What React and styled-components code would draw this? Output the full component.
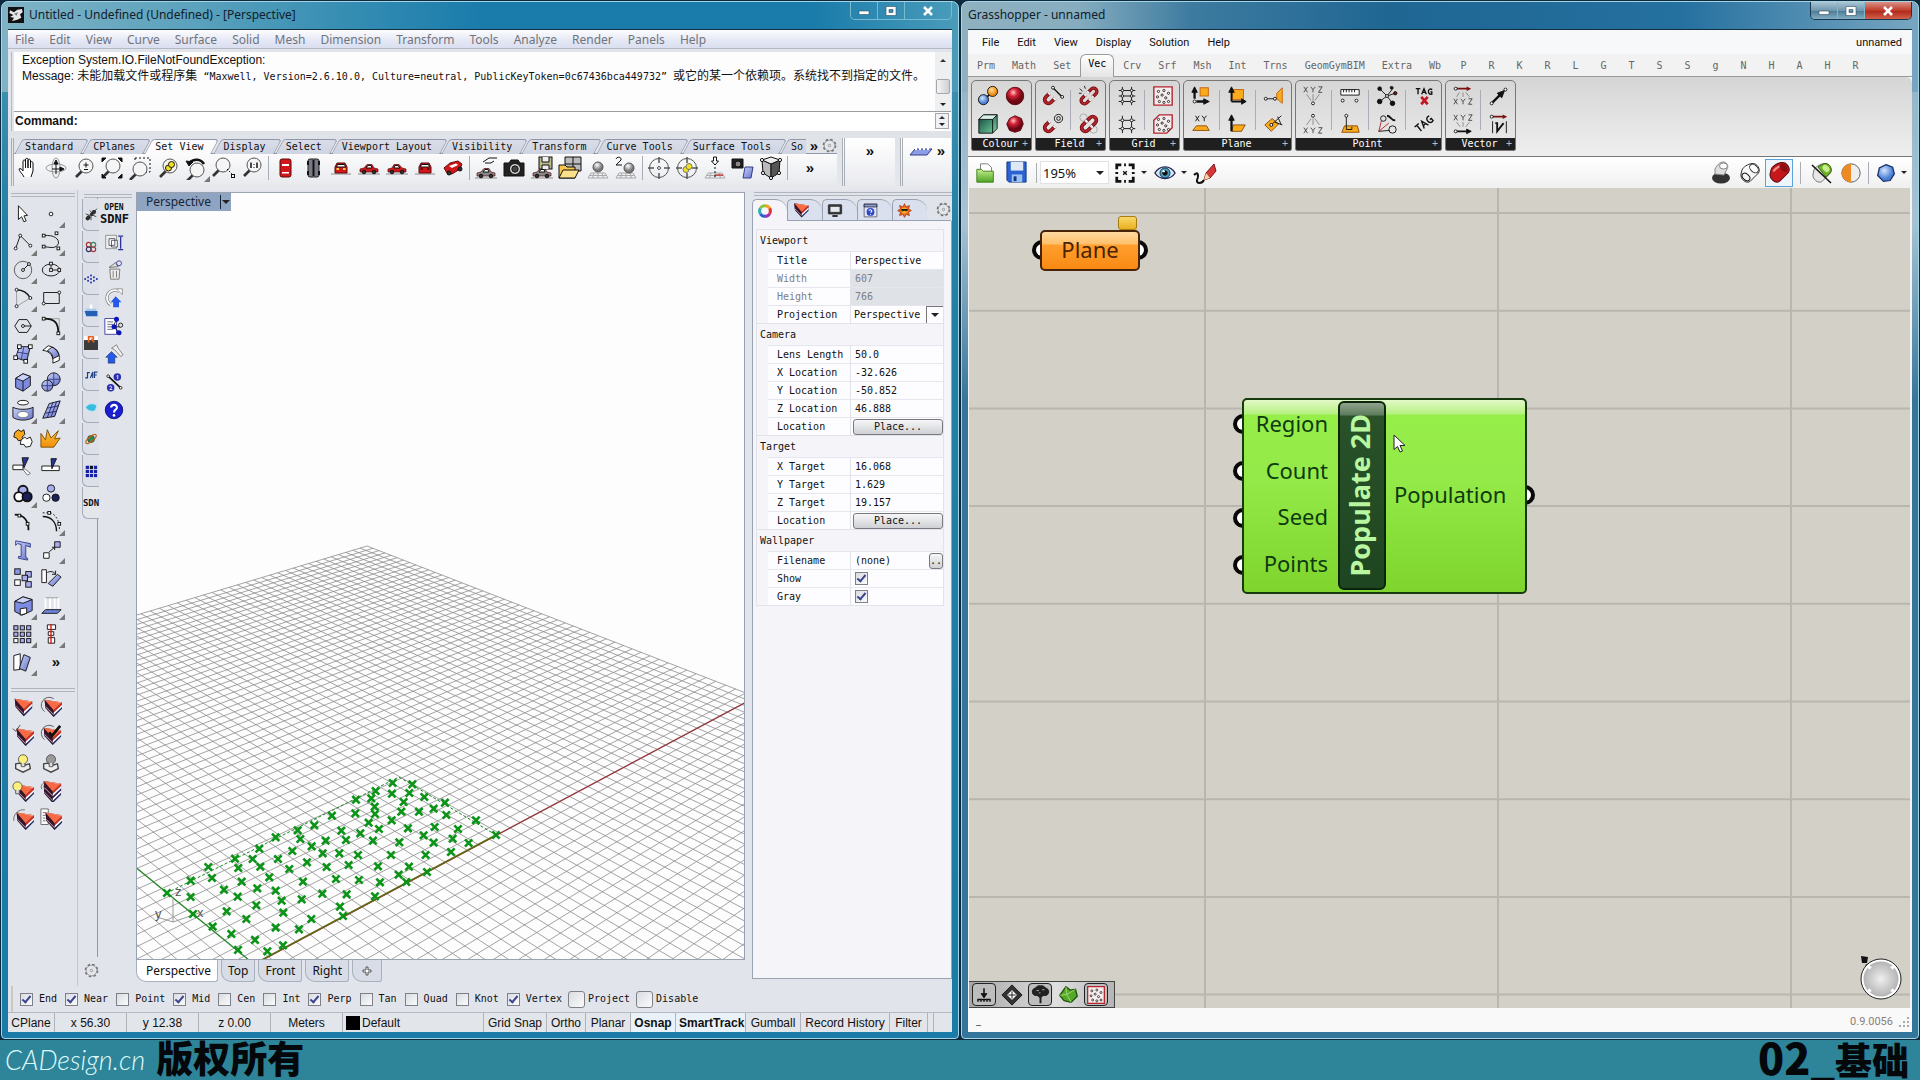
import React from "react";
import styled, { createGlobalStyle, css } from "styled-components";

const SONG = `"DejaVu Sans Mono", "Noto Sans CJK SC", monospace`;
const ARIAL = `"Liberation Sans", Arial, sans-serif`;
const HUMAN = `"Noto Sans", "Open Sans", sans-serif`;
const HEI = `"Noto Sans CJK SC", sans-serif`;

const Global = createGlobalStyle`
  *, *::before, *::after { box-sizing: border-box; }
  body { margin: 0; background: #0d2a3e; font: 12px/16px ${ARIAL}; color: #111; }
  button, input, select { font: inherit; color: inherit; margin: 0; padding: 0; border: 0; background: none; border-radius: 0; outline: none; }
  h1, p { margin: 0; font: inherit; }
`;

/* ---------- drawings ---------- */

const Art = styled.svg`
  display: block;
  flex: none;
  width: ${(p) => p.$s || 24}px;
  height: ${(p) => p.$s || 24}px;
`;

const Paints = () => (
  <svg width="0" height="0" style={{ display: "block" }} aria-hidden="true">
    <defs>
      <radialGradient id="red" cx=".4" cy=".3"><stop offset="0" stopColor="#ffc9c9" /><stop offset=".45" stopColor="#d82338" /><stop offset="1" stopColor="#6e0713" /></radialGradient>
      <radialGradient id="grey" cx=".4" cy=".3"><stop offset="0" stopColor="#fff" /><stop offset="1" stopColor="#777" /></radialGradient>
      <radialGradient id="orange" cx=".4" cy=".35"><stop offset="0" stopColor="#ffdf9a" /><stop offset="1" stopColor="#ef8a0d" /></radialGradient>
      <radialGradient id="blue" cx=".4" cy=".35"><stop offset="0" stopColor="#d2e6ff" /><stop offset="1" stopColor="#4a7ed2" /></radialGradient>
      <linearGradient id="peri" x2="1" y2="1"><stop offset="0" stopColor="#ccd3fb" /><stop offset="1" stopColor="#6473c9" /></linearGradient>
      <linearGradient id="teal" x2="1" y2="1"><stop offset="0" stopColor="#0d4038" /><stop offset="1" stopColor="#78d6a2" /></linearGradient>
      <linearGradient id="green" y2="1" x2="0"><stop offset="0" stopColor="#c6ee8e" /><stop offset="1" stopColor="#4ba522" /></linearGradient>
      <linearGradient id="fire" x2="0" y2="1"><stop offset="0" stopColor="#ffc23a" /><stop offset="1" stopColor="#ef8f0b" /></linearGradient>
      <radialGradient id="compass"><stop offset="0" stopColor="#efefef" /><stop offset="1" stopColor="#b4b4b4" /></radialGradient>
    </defs>
  </svg>
);

const Lens = ({ x = 14, y = 10 }) => (
  <g><path d={`M${x - 4} ${y + 5}L${x - 10} ${y + 11}`} strokeWidth="2.6" stroke="#333" /><circle cx={x} cy={y} r="7" fill="#f5f5f5" stroke="#555" /></g>
);
const Node = ({ x, y, s = 3 }) => <rect x={x - s / 2} y={y - s / 2} width={s} height={s} fill="#fff" stroke="#111" />;
const Dot = ({ x, y, r = 1.6, f = "#fff" }) => <circle cx={x} cy={y} r={r} fill={f} stroke="#111" />;
const Cake = ({ x = 0, y = 0 }) => (
  <g transform={`translate(${x} ${y})`} stroke="none">
    <path d="M2 3L21 6V13L12 22 3 12Z" fill="#20265e" />
    <path d="M2 3L12 14V22L3 12Z" fill="#3a1226" />
    <path d="M2 3L21 6 12 14.500Z" fill="#f86a44" /><path d="M2 3L21 6 20 7Z" fill="#fba184" />
    <path d="M12 14.500L21 6V8.500L12 17Z" fill="#d5301c" /><path d="M12 17L21 8.500V11L12 19.500Z" fill="#fff" />
    <path d="M3 10L12 19V20L3 11Z" fill="#b9b4c2" />
  </g>
);
const CarSide = ({ y = 0, c = "#d3161a" }) => (
  <g transform={`translate(0 ${y})`}><path d="M1 18H23" stroke="#8a8a8a" /><path d="M3 16V13L7 12 10 8.500H15L17 12 21 13V16Z" fill={c} stroke="#5c0b0b" strokeWidth=".7" /><path d="M11 9.500H14L15 12H9Z" fill="#fff" /><Dot x={7} y={16} r={1.800} f="#333" /><Dot x={17} y={16} r={1.800} f="#333" /></g>
);
const CarFront = ({ c = "#ffd23a" }) => (
  <g><path d="M2 18H22" stroke="#8a8a8a" /><path d="M6 17V11L8 7H16L18 11V17Z" fill="#d3161a" stroke="#5c0b0b" /><path d="M8.500 8.500H15.500L16.500 11H7.500Z" fill="#fff" /><path d="M7.500 13H10M14 13H16.500" stroke={c} strokeWidth="2" /></g>
);
const Ground = () => <path d="M5 17H19L22 22H2ZM8 17L6.500 22M12 17V22M16 17L17.500 22M4 19.500H20" stroke="#aaa" />;
const Bulb = ({ f = "#fdf07a", x = 12, y = 8 }) => (
  <g><circle cx={x} cy={y} r="5" fill={f} stroke="#555" /><path d={`M${x - 2} ${y + 4}V${y + 8}H${x + 2}V${y + 4}`} fill="#ddd" stroke="#555" /></g>
);
const Tray = () => <path d="M4 13L9 12 12 15 19 13 20 18 12 22 4 18Z" fill="#eee" stroke="#444" strokeWidth="1.500" />;
const Curl = () => <path d="M5 17A8.500 8.500 0 0 1 15 3" stroke="#555" />;
const Magnet = ({ x, y, r = 45, s = 0.9 }) => (
  <g transform={`translate(${x} ${y}) rotate(${r}) scale(${s})`}>
    <path d="M-4.500 -7V0A4.500 4.500 0 0 0 4.500 0V-7" stroke="#6e0c12" strokeWidth="4.500" />
    <path d="M-4.500 -4V0A4.500 4.500 0 0 0 4.500 0V-4" stroke="#b5222a" strokeWidth="2.500" />
    <path d="M-6.500 -6H-2.500M2.500 -6H6.500" stroke="#f2f2f2" strokeWidth="2.500" />
  </g>
);
const Xyz = ({ y }) => (
  <g stroke="#333" strokeWidth=".9"><path d={`M2 ${y}l4 6m0-6l-4 6M9.500 ${y}l2.500 3 2.500-3m-2.500 3v3M18 ${y}h4l-4 6h4`} /></g>
);
const barrel = "M4 9C5 6 10 3 14 2.500 19 2 23 8 20.500 12L12 20.500C8 23 2 18 3 13Z";
const Can = ({ a, b }) => (
  <g stroke="#333"><path d={barrel} fill={a} strokeLinejoin="round" /><ellipse cx="16" cy="7.500" rx="5" ry="3.500" transform="rotate(45 16 7.500)" fill={b} /></g>
);
const Pop = () => <g>{[[7, 7], [13, 6], [18, 9], [6, 13], [11, 11], [15, 14], [8, 18], [13, 19], [18, 18]].map(([x, y]) => <circle key={x * 30 + y} cx={x} cy={y} r="1.200" fill="#fff" stroke="#111" strokeWidth=".9" />)}</g>;
const Target = () => <g stroke="#555"><circle cx="12" cy="12" r="9.500" /><path d="M12 1V7M12 17V23M1 12H7M17 12H23" strokeWidth="1.500" /></g>;
const tetra = "M3 4L12 1 21 4 12 8Z";

const art = {
  hand: <path d="M8 21C6 17 3 15 3 13 4 12 6 13 7 15V5C8 3 9 4 9.500 6V12 3C10 2 12 2 12 3.500V12 4C13 2.500 14.500 3 14.500 5V12 6C15.500 5 17 6 17 7V15L15 21" fill="#fff" />,
  orbit: <g><ellipse cx="12" cy="12" rx="10" ry="4" stroke="#999" /><ellipse cx="12" cy="12" rx="4" ry="10" stroke="#999" /><path d="M12 7V18M8 13H17" /><path d="M10 8L12 4 14 8ZM16 11L20 13 16 15Z" fill="#111" /></g>,
  zoom: <g><Lens /><path d="M11.500 9H16.500M14 6.500V11.500M12 13.500H16" /></g>,
  zoomExt: <g><Lens x={13} y={10} /><path d="M2 6V2H6ZM18 2H22V6ZM22 18V22H18ZM2 18V22H6Z" fill="#111" /></g>,
  zoomWin: <g><Lens x={12} y={13} /><path d="M7 2H22V16H18M7 2V6" strokeDasharray="2 2" /></g>,
  zoomSel: <g><Lens /><circle cx="12.500" cy="12" r="3" fill="#f2e21e" /><circle cx="15.500" cy="8.500" r="3" fill="#f2e21e" /></g>,
  undoView: <g><Lens x={13} y={14} /><path d="M5 7C10 2 17 3 20 8" strokeWidth="2.500" /><path d="M2 5L5 10 9 6Z" fill="#111" /></g>,
  zoomTo: <g><Lens x={11} y={9} /><path d="M15 13L20 18" strokeDasharray="1.500 1.500" /><Node x={21} y={20} /></g>,
  zoom11: <g><Lens x={14} y={9} /><path d="M11 6.500V12M17 6.500V12" strokeWidth="1.500" /><path d="M14 8V9M14 11V12" /></g>,
  carTop: <g><rect x="7" y="3" width="11" height="18" rx="2" fill="#d3161a" stroke="#5c0b0b" /><path d="M9 8H16V10H9ZM9 16H16V17.500H9Z" fill="#fff" stroke="none" /></g>,
  carBot: <g><rect x="7" y="3" width="11" height="18" rx="2" fill="#777a84" stroke="#222" /><path d="M12.500 4V20" strokeWidth="2" /><path d="M7 5V9M18 5V9M7 15V19M18 15V19" strokeWidth="2" /></g>,
  carFront: <CarFront />, carBack: <CarFront c="#6d0a0a" />, carR: <CarSide />, carL: <g transform="matrix(-1 0 0 1 24 0)"><CarSide /></g>,
  carIso: <g><path d="M3 12L9 7 17 5 21 8 19 13 11 18 6 17Z" fill="#d3161a" stroke="#5c0b0b" /><path d="M8 10L15 7.500 17 9 11 12Z" fill="#fff" stroke="none" /><Dot x={8} y={17} r={2} f="#333" /><Dot x={19} y={13} r={2} f="#333" /></g>,
  carHand: <g><CarSide y={4} c="#888" /><path d="M9 6L15 2H23M11 7H17L20 5" /></g>,
  camera: <g><path d="M2 7H7L9 4H16L18 7H22V20H2Z" fill="#222" /><circle cx="13" cy="13" r="5.500" fill="#ddd" /><circle cx="13" cy="13" r="3.200" fill="#444" /></g>,
  carSave: <g><CarSide y={4} c="#888" /><rect x="9" y="1" width="13" height="12" fill="#b9b887" /><path d="M12 1V6H19V1M12 13V9H19V13" fill="#eee" /></g>,
  folderWin: <g><path d="M7 1H23V15H7ZM15 1V15M7 8H23" fill="#bbb" /><path d="M1 22V9H7L9 11H17V22Z" fill="#f7c64b" /><path d="M1 22L5 14H21L17 22Z" fill="#fde08a" /></g>,
  ball: <g><Ground /><circle cx="12" cy="11" r="5" fill="url(#grey)" stroke="#555" /></g>,
  ball2: <g><Ground /><circle cx="15" cy="12" r="5" fill="url(#grey)" stroke="#555" /><path d="M2 3C3 0 8 1 7 4L2 9H8" /></g>,
  target: <g><Target /><circle cx="12" cy="12" r="1.500" stroke="#555" /></g>,
  targetSel: <g><Target /><circle cx="11" cy="13.500" r="3" fill="#f2e21e" stroke="#777" /><circle cx="14" cy="10.500" r="3" fill="#f2e21e" stroke="#777" /></g>,
  dropPlane: <g><Ground /><path d="M12 7V22" strokeDasharray="2 2" /><path d="M12 19H20" stroke="#c00" /><path d="M10.500 1H13.500V5H15.500L12 9 8.500 5H10.500Z" fill="#fff" /></g>,
  camPlane: <g><path d="M1 3H12V12H1Z" fill="#222" /><circle cx="7" cy="8" r="3" fill="#888" /><path d="M14 11H22L20 22H12Z" fill="url(#peri)" stroke="#333c88" /></g>,
  cube: <g><path d="M3 4L12 8V22L4 17Z" fill="#bbb" /><path d="M12 8L21 4 20 17 12 22Z" fill="#555" /><path d={tetra} fill="#eee" /><Dot x={3} y={4} /><Dot x={21} y={4} /><Dot x={4} y={17} /><Dot x={20} y={17} /><Dot x={12} y={22} /></g>,
  cplane: <g><path d="M1 16L6 10H23L18 16Z" fill="#8d9ee6" stroke="#333c88" /><path d="M6 10H22" stroke="#fff" strokeDasharray="2 2" strokeWidth="2" /></g>,

  arrow: <path d="M7 3V18L10.500 15 13 20.500 15.500 19.500 13 14 17 13.500Z" fill="#fff" />,
  point: <circle cx="12" cy="12" r="2" fill="#fff" />,
  polyline: <g><path d="M4 19L9 5 20 16" /><Dot x={4} y={19} /><Dot x={9} y={5} /><Dot x={20} y={16} /></g>,
  curve: <g><path d="M4 5C24 3 24 19 12 18L4 17" /><Node x={4} y={5} /><Node x={18} y={2.500} /><Node x={4} y={17} /><Node x={20} y={19} /></g>,
  circle: <g><circle cx="12" cy="12" r="9.500" stroke="#555" /><path d="M12 12L18 6" /><Dot x={12} y={12} /><Dot x={18.500} y={5.500} /></g>,
  ellipse: <g><ellipse cx="12" cy="12" rx="9.500" ry="6.500" /><path d="M12 5V12H21" /><Node x={12} y={5} /><Node x={12} y={12} /><Node x={21} y={12} /></g>,
  arc: <g><path d="M5 3A18 18 0 0 1 20 12" strokeWidth="1.500" /><path d="M5 3V21L20 12" stroke="#999" /><Dot x={5} y={3} /><Dot x={5} y={21} /><Dot x={20} y={12} /></g>,
  rect: <g><path d="M4 6H21V18H4Z" /><Dot x={21} y={6} /><Dot x={4} y={18} /></g>,
  polygon: <g><path d="M3 12L7.500 5H16.500L21 12 16.500 19H7.500Z" /><path d="M12 12H21" /><Dot x={12} y={12} /></g>,
  fillet: <g><path d="M4 4H21V20" stroke="#999" /><path d="M4 4C16 4 20 8 20 20" strokeWidth="2" /><Node x={4} y={4} /><Node x={20} y={20} /></g>,
  srfPts: <g><path d="M8 4H20L16 20 4 16Z" fill="url(#peri)" /><path d="M13 4L10 18M6 10L18 12" stroke="#333c88" /><Node x={8} y={4} s={4} /><Node x={20} y={4} s={4} /><Node x={4} y={16} s={4} /><Node x={15} y={20} s={4} /></g>,
  srfBend: <g><path d="M3 8L9 3C18 5 22 10 21 19L14 22C15 14 11 9 3 8Z" fill="#fff" /><path d="M8 8.500L13 4.500C18 7 20 10 20.500 14L14 17C14 13 12 10 8 8.500Z" fill="url(#peri)" /></g>,
  box: <g><path d="M4 8L12 3 20 6V16L12 22 4 18Z" fill="#7d8be0" /><path d="M4 8L12 3 20 6 12 11Z" fill="#ccd3fb" /><path d="M12 11V22" /></g>,
  spheres: <g><circle cx="15" cy="9" r="7" fill="url(#peri)" /><circle cx="8" cy="16" r="6" fill="url(#peri)" /><path d="M8 9H22M15 2V16M2 16H14M8 10V22" stroke="#333c88" /></g>,
  cyl: <g><ellipse cx="12" cy="4" rx="6" ry="2.500" fill="#fff" /><path d="M1 9C6 12 18 12 23 9V20C18 24 6 24 1 20Z" fill="url(#peri)" /><ellipse cx="12" cy="17" rx="6" ry="3.500" fill="#fff" stroke="#777" /></g>,
  mesh: <g><path d="M10 5L22 2 16 19 3 21Z" fill="url(#peri)" /><path d="M8 10L20 7.500M6 15.500L18 13.500M14 4L8 20M18 3L12 19.500" stroke="#222a66" /></g>,
  gearJoin: <g><path d="M3 6L7 3 10 5 13 3 14 8 11 11 12 14 7 15 5 12 2 11Z" fill="#f8a61c" /><path d="M10 14L14 11 16 13 20 11 22 16 20 21 15 22 13 19 9 19Z" fill="#fff" /></g>,
  explode: <path d="M1 22V7L6 14 8 3 12 12 20 4 16 13 22 12 15 22Z" fill="url(#fire)" stroke="#7a4b05" />,
  trim: <g><path d="M1 11H12V16H1Z" fill="#fff" /><path d="M14 15L20 20 17 22 12 16Z" fill="#fff" stroke="#666" /><path d="M11 3H18L13 14Z" fill="#2a3590" /></g>,
  split: <g><path d="M2 12H21V17H2Z" fill="#fff" /><path d="M12 4H18L13 15Z" fill="#2a3590" /></g>,
  union: <g strokeWidth="2"><circle cx="12" cy="8" r="5" fill="#a8adef" /><circle cx="7.500" cy="15" r="5" fill="#fff" /><circle cx="16.500" cy="15" r="5" fill="#1b2056" /></g>,
  diff: <g><circle cx="12" cy="6" r="4" fill="#a8adef" /><circle cx="7" cy="16" r="4" fill="#fff" /><circle cx="17" cy="16" r="4" fill="#1b2056" /></g>,
  editPt: <g><path d="M3 4C14 4 18 12 18 21" strokeWidth="2" /><Node x={8} y={5} /><Node x={17} y={14} /></g>,
  offset: <g><path d="M3 6C12 6 18 12 18 22" strokeWidth="1.500" /><path d="M3 2H12C18 5 22 12 21 22" strokeDasharray="2 2" /><Node x={10} y={2} /><Node x={21} y={14} /></g>,
  text: <path d="M4 2L20 5V9L15 7V20L17 21V23L7 21V19L10 19V6L6 5 4 7Z" fill="url(#peri)" stroke="#333c88" />,
  move: <g><path d="M4 15H10V21H4Z" fill="#fff" /><path d="M16 3H22V9H16Z" fill="#a8adef" /><path d="M10 14L16 9M13 9H16V12" /></g>,
  copy: <g><rect x="3" y="2" width="6" height="6" fill="#8d96e0" /><rect x="15" y="5" width="6" height="6" fill="#a8adef" /><rect x="11" y="9" width="6" height="6" fill="#a8adef" /><rect x="3" y="14" width="6" height="6" fill="#fff" /><rect x="15" y="16" width="6" height="6" fill="#a8adef" /></g>,
  rotate: <g><path d="M2 3H7V17H2Z" fill="#fff" /><path d="M8 6C12 4 15 5 17 8M13 8H17V4" /><path d="M19 8L23 11 14 21 9 18Z" fill="url(#peri)" /></g>,
  boxCut: <g><path d="M3 7L12 2 22 5V17L11 22 3 18Z" fill="#7d8be0" /><path d="M3 7L12 2 22 5 12 9Z" fill="#ccd3fb" /><path d="M9 15L16 14V20L9 22Z" fill="#fff" /></g>,
  project: <g><path d="M2 20L6 16H23L19 20Z" fill="#6f85dd" /><path d="M6 3V15M11 3V15M16 3V15M20 3V15" stroke="#fff" strokeWidth="2" /><path d="M6 3H20" stroke="#999" /></g>,
  array: <g>{[3, 10, 17].map((y) => [2, 9, 16].map((x) => <rect key={x + "," + y} x={x} y={y} width="4.500" height="4.500" fill={y === 17 && x === 2 ? "#fff" : "#a8adef"} />))}</g>,
  align: <g><path d="M8 2H17V7H8ZM9 9.500H15V13.500H9ZM9 16H16V22H9Z" fill="#fff" /><path d="M12 1V23" stroke="#e01010" strokeWidth="1.500" /></g>,
  bend: <g><path d="M2 5L9 3V20L2 21Z" fill="#fff" /><path d="M13 4L20 7 15 22 8 19Z" fill="url(#peri)" /></g>,
  cake: <Cake x={1} />, cakeRot: <g><Cake x={3} y={1} /><Curl /></g>,
  cakeChk: <g><Cake x={3} y={2} /><path d="M1 5L4 8 9 1" stroke="#444" /></g>,
  cakeSel: <g><Cake x={2} y={1} /><Curl /><path d="M10 9L13 13 22 2" strokeWidth="3" /></g>,
  bulb: <g><Tray /><Bulb /></g>, bulbOff: <g><Tray /><Bulb f="#999" /></g>,
  bulbCake: <g><Cake x={3} y={2} /><Bulb x={6} y={7} /></g>,
  cakeStack: <g><Cake x={2} y={3} /><Cake x={2} y={-2} /><path d="M2 10C0 6 3 3 6 3" stroke="#666" /></g>,
  cakeFade: <g><Cake x={3} y={2} /><path d="M2 14C1 7 7 1 14 2" stroke="#666" /></g>,
  cakeList: <g><path d="M1 1H9V18H1ZM3 5H6M3 8H6M3 11H6M3 14H6" fill="#fff" stroke="#666" /><Cake x={4} y={2} /></g>,

  ant: <g strokeWidth="1.200"><ellipse cx="7" cy="17" rx="4" ry="3" transform="rotate(-45 7 17)" fill="#333" /><circle cx="13" cy="11" r="2.500" fill="#333" /><circle cx="17" cy="7" r="3" fill="#333" /><path d="M10 13L3 10M12 14V21M14 9L10 4M15 12L21 15M19 5L22 1" /></g>,
  rings: <g strokeWidth="2"><circle cx="8" cy="8" r="4" stroke="#a33" /><circle cx="16" cy="8" r="4" stroke="#385" /><circle cx="8" cy="16" r="4" stroke="#336" /><circle cx="16" cy="16" r="4" stroke="#a33" /></g>,
  dots: <g fill="#2233aa" stroke="none">{[[12, 6], [7, 9], [17, 9], [2, 12], [12, 12], [22, 12], [7, 15], [17, 15], [12, 18]].map(([x, y]) => <rect key={x * 30 + y} x={x - 1.500} y={y - 1.500} width="3" height="3" />)}</g>,
  ship: <g stroke="none"><path d="M1 12H23V21H4Z" fill="#2461b5" /><path d="M3 8H21V12H3Z" fill="#a9c6ea" /><path d="M10 1H14V8H10Z" fill="#fff" /></g>,
  rlogo: <g stroke="none"><path d="M0 0H24V7H0Z" fill="#fff" /><path d="M0 7H24V24H0Z" fill="#3b3b3b" /><path d="M8 11V1H14C17 1 17 6 14 6L17 11" stroke="#e8601b" strokeWidth="3" /></g>,
  saf: <path d="M2 17H6V8H10M11 17L15 7V17M18 17V7H23M18 12H22" stroke="#1d3f80" strokeWidth="2" />,
  fish: <path d="M3 13C7 5 17 5 22 10L19 18C12 21 6 18 3 13Z" fill="#38bde0" stroke="#bfeaf5" />,
  planet: <g><circle cx="12" cy="12" r="6" fill="#2c8a57" /><ellipse cx="12" cy="12" rx="11" ry="4" transform="rotate(-40 12 12)" stroke="#b8651b" strokeWidth="2" /></g>,
  squares: <g stroke="none">{[3, 10, 17].map((y) => [3, 10, 17].map((x) => <rect key={x + "," + y} x={x} y={y} width="5.500" height="5.500" fill={y === 3 && x === 10 ? "#111" : "#1420a8"} />))}</g>,
  paste: <g><path d="M2 4H15V20H2Z" fill="#eee" stroke="#888" /><path d="M6 8H13V16H6ZM9 10H16V18H9Z" fill="#fff" stroke="#445" /><path d="M20 6V20M17 5H23M17 21H23" stroke="#2a2f9a" strokeWidth="1.500" /></g>,
  trash: <g stroke="#666"><path d="M7 11H19L18 23H8Z" fill="#eee" /><path d="M11 13V21M15 13V21" /><path d="M6 9L14 3 17 8Z" fill="#ddd" /><circle cx="18" cy="4" r="3" stroke="#2a2f9a" /></g>,
  home1: <g><path d="M18 4A9 9 0 1 0 8 20" stroke="#888" strokeWidth="4" /><path d="M18 4A9 9 0 1 0 8 20" stroke="#fff" strokeWidth="2" /><path d="M15 1H22V8Z" fill="#fff" stroke="#888" /><path d="M8 17L14 10 21 17H18V23H11V17Z" fill="#2458e8" stroke="none" /></g>,
  tree: <g><path d="M1 3H15V22H1Z" fill="#fff" stroke="#2a2f9a" /><path d="M4 7H11M4 10H11M4 13H11M4 16H11" stroke="#557" /><path d="M15 4L11 13 19 20M12 13H20" /><g fill="#0d17b8" stroke="none"><circle cx="15" cy="4" r="3" /><circle cx="12" cy="13" r="3" /><circle cx="18" cy="20" r="3" /></g><circle cx="20" cy="11" r="2.500" fill="#ddd" /></g>,
  hammer: <g><path d="M2 16L9 9 16 16H13V23H5V16Z" fill="#2458e8" stroke="#113" strokeWidth=".5" /><path d="M9 5L15 1 17 5 23 13 20 15 13 7Z" fill="#eee" stroke="#777" /></g>,
  link: <g><path d="M5 5L20 19" strokeWidth="2" /><Dot x={5} y={5} /><Dot x={20} y={19} /><circle cx="16" cy="6" r="4.500" fill="#2a2fb0" stroke="none" /><circle cx="8" cy="19" r="4.500" fill="#2a2fb0" stroke="none" /><path d="M15 5L16.500 4V8.500M6.500 18C7 16 10 17 9 19L7 21H10" stroke="#fff" /></g>,
  help: <g><circle cx="12" cy="12" r="10.500" fill="#1a1fd0" stroke="#0a0c70" /><path d="M8.500 9C9 4.500 16 5 15.500 9.500 15 12 12 11.500 12 15" stroke="#fff" strokeWidth="2.500" /><circle cx="12" cy="18.500" r="1.600" fill="#fff" stroke="none" /></g>,
  cog: <g stroke="#777"><circle cx="12" cy="12" r="9.500" strokeWidth="3" strokeDasharray="4 3.460" /><circle cx="12" cy="12" r="8.500" fill="#e4e6eb" /><circle cx="12" cy="12" r="2" /></g>,
  wheel: <g strokeWidth="4.500"><path d="M12 4A8 8 0 0 1 19 8" stroke="#f5a11c" /><path d="M19 8A8 8 0 0 1 19 16" stroke="#e2352b" /><path d="M19 16A8 8 0 0 1 12 20" stroke="#a52bb0" /><path d="M12 20A8 8 0 0 1 5 16" stroke="#2a5ed8" /><path d="M5 16A8 8 0 0 1 5 8" stroke="#28b3b0" /><path d="M5 8A8 8 0 0 1 12 4" stroke="#8ac43a" /></g>,
  monitor: <g><rect x="2" y="4" width="20" height="14" rx="1" fill="#444" /><path d="M4.500 6.500H19.500V15.500H4.500Z" fill="#e4eaf2" /><path d="M8 21H16" strokeWidth="2.500" /></g>,
  helpDoc: <g><path d="M3 3H21V21H3Z" fill="#dfe6fa" stroke="#445" /><path d="M3 3H21V7H3Z" fill="#8a9bd8" /><circle cx="12" cy="14" r="5.500" fill="#2a45c8" stroke="none" /><path d="M10 12.500C10 10 14 10.500 14 13L12 15M12 17V18" stroke="#fff" strokeWidth="1.500" /></g>,
  sun: <g><path d="M12 1L14.500 6 20 4 18.500 9.500 23 12 18.500 15 20 20 14.500 18.500 12 23 9.500 18.500 4 20 5.500 15 1 12 5.500 9.500 4 4 9.500 6Z" fill="#e8601b" stroke="#9c2f07" /><circle cx="12" cy="12" r="5" fill="#f3b02a" stroke="none" /><path d="M7 11H17M9 12.500H10M14 12.500H15" strokeWidth="2.500" /></g>,
  rhino: <g stroke="none"><path d="M0 0H24V24H0Z" fill="#111" /><path d="M3 5L9 8 14 4 21 3 22 8 18 11 20 16 14 19 6 21 9 16 3 15 8 12 2 9Z" fill="#e6e6e6" /><path d="M9 10L15 8 13 13Z" fill="#777" /></g>,

  balls: <g><path d="M8 16L16 8" strokeWidth="2" /><circle cx="17" cy="7" r="5.500" fill="url(#orange)" /><circle cx="7" cy="16" r="5.500" fill="url(#blue)" /></g>,
  redBall: <circle cx="12" cy="12" r="9.500" fill="url(#red)" stroke="#5e0913" />,
  redPoly: <path d="M12 3L19 6 21 12 18 19 12 21 6 19 3 12 6 6Z" fill="url(#red)" stroke="#5e0913" />,
  tealBox: <g><path d="M2 7L7 2H22V17L17 22H2Z" fill="url(#teal)" /><path d="M2 7L7 2H22L17 7Z" fill="#d7eee4" /><path d="M17 7V22" /></g>,
  mag1: <g><Magnet x={7} y={16} /><path d="M12 3L22 13" strokeWidth="1.500" /><Dot x={12} y={3} /><Dot x={22} y={13} /></g>,
  mag2: <g><Magnet x={7} y={17} s={0.8} /><Magnet x={17} y={7} r={225} s={0.8} /><path d="M2 4L5 7M7 1L8 4M1 9L4 9" /></g>,
  mag3: <g><Magnet x={7} y={16} /><circle cx="18" cy="6" r="4.500" /><circle cx="18" cy="6" r="2" /></g>,
  mag4: <g><circle cx="17" cy="18" r="4" stroke="#aaa" /><circle cx="6" cy="5" r="4" stroke="#aaa" /><Magnet x={8} y={16} s={0.9} /><Magnet x={16} y={8} r={225} s={0.9} /></g>,
  grid3: <g><path d="M3 6H21M3 12H21M3 18H21M7 2V22M17 2V22" />{[6, 12, 18].map((y) => [7, 17].map((x) => <Dot key={x + "," + y} x={x} y={y} r={1.400} />))}</g>,
  grid2: <g><path d="M3 8H21M3 17H21M7 3V22M17 3V22" /><Dot x={7} y={8} /><Dot x={17} y={8} /><Dot x={7} y={17} /><Dot x={17} y={17} /></g>,
  pop2: <g><path d="M2 2H22V22H2Z" fill="#f5eded" stroke="#b3242c" strokeWidth="1.500" /><Pop /></g>,
  pop3: <g><path d="M2 8L8 2H22V16L16 22H2Z" fill="#f5eded" stroke="#b3242c" strokeWidth="1.500" /><Pop /></g>,
  plane1: <g><rect x="11" y="3" width="9" height="9" fill="#f9ab1b" stroke="#c5610c" /><path d="M5 15V6M7 18H16" strokeWidth="2.500" /><path d="M2 8L5 2 8 8ZM15 15L21 18 15 21Z" fill="#111" /><Dot x={5} y={18} /></g>,
  plane2: <g><rect x="7" y="5" width="12" height="11" fill="#f9ab1b" stroke="#c5610c" /><path d="M6 18V6M6 18H18" strokeWidth="2" /><path d="M3 8L6 2 9 8ZM17 15L22 18 17 21Z" fill="#111" /></g>,
  plane3: <g><path d="M21 3V20L15 15V9Z" fill="#f9ab1b" stroke="#c5610c" /><path d="M3 15H15" /><Dot x={3} y={15} /><Dot x={13} y={15} /></g>,
  planeXY: <g><path d="M6 3L10 9M10 3L6 9M13 3L15.500 6 18 3M15.500 6V9" /><path d="M7 14H18L21 19H3Z" fill="#f9ab1b" stroke="#8c4a0a" /></g>,
  plane4: <g><path d="M8 13H21L17 20H6Z" fill="#f9ab1b" stroke="#8c4a0a" /><path d="M6 20V5" strokeWidth="2.500" /><path d="M3 8L6 2 9 8Z" fill="#111" /></g>,
  plane5: <g><path d="M2 13L10 6 17 12 9 20Z" fill="#f9ab1b" stroke="#8c4a0a" /><path d="M9 13L20 3M13 10L21 13M16 4L20 13" /><Dot x={9} y={13} /></g>,
  xyzDown: <g><Xyz y={2} /><path d="M5 10L10 17M12 10V17M19 10L14 17" stroke="#888" /><Dot x={12} y={20} /></g>,
  xyzUp: <g><Xyz y={16} /><path d="M10 6L5 13M12 6V13M14 6L19 13" stroke="#888" /><Dot x={12} y={3} /></g>,
  ruler: <g><path d="M2 5H22V11H2ZM5 5V8M8 5V8M11 5V8M14 5V8M17 5V8" fill="#fff" /><Dot x={4} y={17} /><Dot x={19} y={17} /></g>,
  pointPull: <g><path d="M6 14H20L22 21H3Z" fill="#f9ab1b" stroke="#8c4a0a" /><path d="M8 3V18H14V15" /><Dot x={8} y={3} /></g>,
  star: <g><path d="M12 12L4 4M12 12L19 3M12 12L21 9M12 12L4 18M12 12L18 20" /><circle cx="4" cy="4" r="2" fill="#111" /><circle cx="4" cy="18" r="2.500" fill="#111" /><circle cx="18" cy="20" r="2.500" fill="#111" /><circle cx="21" cy="9" r="1.800" fill="#7a1010" /><circle cx="17" cy="3" r="1.500" fill="#111" /><Dot x={12} y={12} /></g>,
  sort: <g><circle cx="8" cy="6" r="3" /><path d="M3 20L6 8M3 20L14 11" stroke="#b3242c" /><path d="M3 20L15 19" /><path d="M12 3C16 3 16 8 21 8" strokeWidth="2" /><circle cx="18" cy="18" r="4" /></g>,
  tagX: <g><path d="M3 4H8M5.500 4V10M9.500 10L12 4 14.500 10M10.500 8H13.500M21 5C16 2 15 11 20.500 10V7.500H19" strokeWidth="1.500" /><path d="M9 13L16 21M16 13L9 21" stroke="#c31822" strokeWidth="3" /></g>,
  tag: <g transform="rotate(-40 12 12) translate(0 4)"><path d="M2 4H8M5 4V12M9 12L12 4 15 12M10.500 9H13.500M22 5C16 2 15 14 22 11.500V8.500H20" strokeWidth="1.500" /></g>,
  vecXyz: <g><path d="M5 4H18" stroke="#7a1010" strokeWidth="2" /><path d="M16 1.500L21 4 16 6.500Z" fill="#7a1010" stroke="none" /><Dot x={4} y={4} /><Xyz y={15} /><path d="M8 8L5 13M12 8V13M15 8L19 13" stroke="#888" /></g>,
  xyzVec: <g><Xyz y={2} /><path d="M5 10L9 15M12 10V15M19 10L15 15" stroke="#888" /><path d="M5 20H18" strokeWidth="2" /><path d="M16 17.500L21 20 16 22.500Z" fill="#111" /><Dot x={4} y={20} /></g>,
  vec2: <g><path d="M5 19L14 10" strokeWidth="2.500" /><path d="M10 9L18 6 15 14Z" fill="#111" /><Dot x={4} y={20} /><Dot x={19} y={5} /></g>,
  vecLen: <g><path d="M5 4H17" stroke="#7a1010" strokeWidth="2" /><path d="M16 1.500L21 4 16 6.500Z" fill="#7a1010" stroke="none" /><Dot x={4} y={4} /><path d="M5 9V22M20 9V22" /><path d="M8 11H10V20L17 11" strokeWidth="2" /></g>,
  open: <g><path d="M6 2H14L18 6V12H6Z" fill="#fff" stroke="#777" /><path d="M2 8H7L9 10H20V22H2Z" fill="url(#green)" stroke="#3d7d17" /></g>,
  save: <g><path d="M2 1H22V22H4L2 20Z" fill="#2a63cf" stroke="#123a86" /><path d="M6 1H19V10H6Z" fill="#dfe8f5" stroke="none" /><path d="M7 14H18V22H7Z" fill="#9cc0ef" stroke="none" /><path d="M9 16H12V21H9Z" fill="#123a86" stroke="none" /></g>,
  fit: <g strokeWidth="3"><path d="M3 8V3H8M16 3H21V8M21 16V21H16M8 21H3V16M3 11V13M21 11V13M11 3H13M11 21H13" /><path d="M10 10L14 14M14 10L10 14" strokeWidth="1.500" /></g>,
  eye: <g><path d="M1 12C6 3 18 3 23 12 18 20 6 20 1 12Z" fill="#d3eaf5" stroke="#225" strokeWidth="1.500" /><circle cx="12" cy="12" r="5.500" fill="#4c9cc4" stroke="#134" /><circle cx="12" cy="12" r="2.500" fill="#111" /><circle cx="10.500" cy="10" r="1.300" fill="#fff" stroke="none" /></g>,
  pencil: <g><path d="M1 14C5 10 6 14 4 19 3 23 9 23 11 19" strokeWidth="2" /><path d="M11 19L13 12 21 3 23 10 17 17Z" fill="#d6383a" stroke="#7d1518" /><path d="M11 19L13 12 17 17Z" fill="#f1d7a3" stroke="none" /></g>,
  canGrey: <g><ellipse cx="12" cy="17" rx="9" ry="5.500" fill="#333" stroke="none" /><path d="M6 8C8 4 11 1 14 1 18 1 20 5 18 8L15 14 6 13Z" fill="#ddd" stroke="#888" /><ellipse cx="14.500" cy="5" rx="4" ry="3" fill="#fff" stroke="#888" /></g>,
  canWire: <g><Can a="none" b="#fff" /><ellipse cx="8" cy="16" rx="4.500" ry="3" transform="rotate(45 8 16)" /></g>,
  canRed: <g><path d={barrel} fill="#c5181c" stroke="#5a0a0a" /><ellipse cx="16" cy="7.500" rx="4.500" ry="3" transform="rotate(45 16 7.500)" fill="#8d0e12" stroke="none" /><path d="M6 11C8 8 10 7 12 6" stroke="#ef8a86" strokeWidth="2" /></g>,
  canGreen: <g><path d={barrel} fill="#e6e6e6" stroke="#777" /><path d="M8 6L14 2.500C20 2 23 8 20 12L16 16Z" fill="#6fb427" stroke="#3b6b10" /><ellipse cx="16" cy="7.500" rx="4" ry="2.800" transform="rotate(45 16 7.500)" fill="#c7ec8b" stroke="none" /><path d="M2 4L21 22" strokeWidth="1.500" /></g>,
  ballHalf: <g stroke="none"><circle cx="12" cy="12" r="10" fill="#eee" stroke="#555" /><path d="M12 2A10 10 0 0 0 12 22Z" fill="#ee8a24" /></g>,
  hexBlue: <path d="M12 2L20 5 22 13 17 21 9 22 2 15 4 6Z" fill="url(#blue)" stroke="#16306e" strokeWidth="1.500" />,
  down: <g><path d="M12 3V14M3 18H21M4 18V21M8 18V21M12 18V21M16 18V21M20 18V21" strokeWidth="2" /><path d="M8 10L12 16 16 10Z" fill="#111" /></g>,
  diamond: <g><path d="M12 1L23 12 12 23 1 12Z" fill="#333" /><path d="M12 6L18 12 12 18 6 12Z" fill="#fff" /><path d="M12 8V16M8 12H16" /></g>,
  oak: <g><path d="M12 1C16 0 17 3 19 4 23 5 23 10 21 12 18 15 15 12 12 13 9 12 6 15 3 12 1 10 1 5 5 4 7 3 8 0 12 1Z" fill="#222" /><path d="M12 9V23M12 16L6 10M12 15L18 10" stroke="#222" strokeWidth="2.500" /><path d="M7 7H10M14 6H17M10 10H12" stroke="#ccc" /></g>,
  leaf: <g><path d="M2 13L9 3 14 7 20 6 22 14 15 21 7 19Z" fill="#55a92a" stroke="#1e5208" strokeWidth="1.500" /><path d="M9 3L10 12 2 13M10 12L20 6M10 12L15 21" stroke="#a6dc7b" /></g>,
};

const Icon = ({ name, size }) => (
  <Art $s={size} viewBox="0 0 24 24" fill="none" stroke="#111" aria-hidden="true">{art[name]}</Art>
);

/* ---------- desktop and window frame ---------- */

const Desktop = styled.div`
  height: 100vh;
  min-height: 720px;
  display: flex;
  flex-direction: column;
`;
const Windows = styled.main`
  flex: 1;
  min-height: 0;
  display: flex;
  gap: 2px;
  padding: 1px;
`;
const Frame = styled.section`
  flex: 1 1 0;
  min-width: 0;
  display: flex;
  flex-direction: column;
  border: 1px solid #a5d4e4;
  border-radius: 7px 7px 4px 4px;
  padding: 0 6px 6px;
  background: ${(p) => p.$active
    ? "linear-gradient(90deg,#8fb1c0 0,#86adbf 12%,#3d7ba0 24%,#1f6693 45%,#24709f 75%,#78a6c2 100%) 0 0/100% 90px no-repeat, linear-gradient(#8aaec2 0,#a6c3d2 220px,#35759b 400px,#34759c 100%)"
    : "linear-gradient(90deg,#7fb3c5 0,#5ba2bd 20%,#3a90b4 34%,#1a7cab 50%,#1a7cab 85%,#4a9cba 100%) 0 0/100% 90px no-repeat, linear-gradient(#4a9ab8 0,#2480a4 220px,#1a7ba8 100%)"};
`;
const TitleBar = styled.header`
  height: 27px;
  flex: none;
  display: flex;
  align-items: flex-start;
`;
const TitleText = styled.h1`
  flex: 1;
  display: flex;
  align-items: center;
  gap: 5px;
  height: 25px;
  font: 12px/16px ${HUMAN};
  color: #10202c;
  white-space: nowrap;
`;
const Caption = styled.div`
  display: flex;
  height: 18px;
  border: 1px solid ${(p) => (p.$active ? "#16384e" : "#78bad0")};
  border-top: 0;
  border-radius: 0 0 5px 5px;
  overflow: hidden;
`;
const CaptionButton = styled.button`
  width: ${(p) => (p.$close ? 46 : 27)}px;
  display: flex;
  align-items: center;
  justify-content: center;
  border-right: ${(p) => (p.$close ? "0" : "1px solid #78bad0")};
  background: ${(p) => p.$active && (p.$close ? "linear-gradient(#d9938a,#c13a28 50%,#b02c1c 55%,#d2604a)" : "linear-gradient(#a9c5d4,#6f97ae 50%,#4f7d98 55%,#83aec4)")};
`;
const Client = styled.div`
  flex: 1;
  min-height: 0;
  display: flex;
  flex-direction: column;
  background: ${(p) => p.$bg};
  border: 0 solid #14303f;
  border-top-width: 1px;
`;

const WindowFrame = ({ title, icon, active, bg, children }) => (
  <Frame $active={active}>
    <TitleBar>
      <TitleText>{icon && <Icon name={icon} size={16} />}{title}</TitleText>
      <Caption $active={active}>
        <CaptionButton $active={active} aria-label="Minimize"><Art $s={14} viewBox="0 0 14 14"><rect x="2" y="7" width="10" height="3.500" fill="#fff" stroke="#34515f" strokeWidth=".6" /></Art></CaptionButton>
        <CaptionButton $active={active} aria-label="Maximize"><Art $s={14} viewBox="0 0 14 14"><path d="M2 2.500H12V11.500H2ZM5 5.500V8.500H9V5.500Z" fill="#fff" fillRule="evenodd" stroke="#34515f" strokeWidth=".6" /></Art></CaptionButton>
        <CaptionButton $active={active} $close aria-label="Close"><Art $s={14} viewBox="0 0 14 14"><path d="M3 3L11 11M11 3L3 11" stroke="#fff" strokeWidth="2.500" /></Art></CaptionButton>
      </Caption>
    </TitleBar>
    <Client $bg={bg}>{children}</Client>
  </Frame>
);

/* ---------- modelling window ---------- */

const MenuBar = styled.nav`
  display: flex;
  flex: none;
  align-items: center;
  ${(p) => p.$gh
    ? css`height: 24px; padding: 1px 10px 0 14px; gap: 18px; font: 11px/16px "Roboto", ${ARIAL}; color: #111; background: #f7f8f9;`
    : css`height: 19px; padding: 2px 7px 0; gap: 15px; font: 12px/16px ${HUMAN}; color: #70747c; background: linear-gradient(#fdfdff, #e4e7f4 60%, #dadff0); border-bottom: 1px solid #b4bac4;`}
`;
const MenuItem = styled.button`white-space: nowrap;`;
const DocName = styled.span`margin-left: auto;`;

const Command = styled.div`
  flex: none;
  margin: 3px 1px 0 3px;
  border-left: 1px solid #b5b9c0;
  padding-left: 2px;
`;
const History = styled.div`
  height: 60px;
  display: flex;
  background: #fdfdfe;
  border-bottom: 1px solid #9a9da2;
`;
const HistoryText = styled.div`
  flex: 1;
  min-width: 0;
  padding: 1px 8px;
  font: 12px/15px ${ARIAL};
  white-space: nowrap;
  p { height: 15px; }
`;
const Song = styled.span`font: 10px/13px ${SONG};`;
const Cjk = styled.span`font: 12px/13px ${HEI};`;
const ScrollBar = styled.div`
  width: 16px;
  background: #eeeff1;
  display: flex;
  flex-direction: column;
  align-items: center;
  justify-content: space-between;
  padding: 7px 1px 5px;
`;
const Thumb = styled.span`width: 14px; height: 15px; margin-top: 8px; border: 1px solid #a3a6aa; border-radius: 2px; background: linear-gradient(90deg,#f5f5f5,#cfd0d3);`;
const Prompt = styled.label`
  display: flex;
  align-items: center;
  height: 19px;
  background: #fff;
  font: bold 12px/16px ${ARIAL};
  padding: 0 0 2px 1px;
`;
const PromptInput = styled.input`flex: 1; min-width: 0; height: 17px; padding-left: 4px; font-weight: normal;`;
const Spin = styled.span`width: 14px; height: 16px; margin-right: 2px; border: 1px solid #a3a6aa; display: flex; flex-direction: column; align-items: center; justify-content: space-around; background: #f0f1f5;`;
const Tri = styled.i`
  border: ${(p) => p.$w || 3}px solid transparent;
  width: 0; height: 0; flex: none;
  ${(p) => p.$up ? "border-bottom-color: #333; border-top: 0;" : "border-top-color: #222; border-bottom: 0;"}
`;

const Bars = styled.div`
  flex: none;
  display: flex;
  gap: 5px;
  height: 59px;
  padding: 7px 1px 4px 3px;
  background: linear-gradient(#dfe2e7, #e6e8ec);
`;
const BarShell = styled.div`
  display: flex;
  flex-direction: column;
  ${(p) => (p.$grow ? "flex: 1; min-width: 0;" : `width: ${p.$w}px; flex: none; align-items: flex-start; padding: 3px 2px 0;`)}
  border-left: 3px double #a9adb5;
  background: ${(p) => (p.$grow ? "none" : "linear-gradient(#fff,#e9eaee)")};
`;
const BarRow = styled.div`display: flex; align-items: center; width: 100%; height: 20px; justify-content: ${(p) => (p.$mid ? "center" : "flex-end")};`;
const TabStrip = styled.div`
  display: flex;
  align-items: center;
  height: 16px;
  border-bottom: 1px solid #8f98ab;
`;
const TabClip = styled.div`flex: 1; min-width: 0; display: flex; height: 16px; overflow: hidden; padding-left: 1px;`;
const SlantTab = styled.button`
  position: relative;
  flex: none;
  height: 16px;
  padding: 0 10px;
  font: 10px/17px ${SONG};
  z-index: ${(p) => (p.$on ? 1 : 0)};
  &::before {
    content: "";
    position: absolute;
    z-index: -1;
    inset: 1px -2px -1px 3px;
    transform: skewX(-28deg);
    border: 1px solid #8f98ab;
    border-bottom: 0;
    border-radius: 3px 4px 0 0;
    background: ${(p) => (p.$on ? "#fbfbfc" : "linear-gradient(#dadde9,#ced3e1)")};
  }
  isolation: isolate;
`;
const Chevron = styled.button`font: bold 15px/16px ${ARIAL}; width: 16px; flex: none; text-align: center;`;
const Tools = styled.div`
  flex: 1;
  display: flex;
  align-items: center;
  padding: 0 0 4px 0;
  background: linear-gradient(#fbfbfc, #e7e9ed);
`;
const Tool = styled.button`
  width: ${(p) => p.$w || 28}px;
  height: 28px;
  flex: none;
  display: flex;
  align-items: center;
  justify-content: center;
  position: relative;
  ${(p) => p.$more && css`&::after { content: ""; position: absolute; right: 0; bottom: 0; border: 3px solid #777; border-top-color: transparent; border-left-color: transparent; }`}
`;
const Rule = styled.span`width: 1px; height: ${(p) => p.$h || 24}px; flex: none; margin: 0 ${(p) => p.$m || 2}px; background: #a9adb5;`;

const Body = styled.div`flex: 1; min-height: 0; display: flex;`;
const Dock = styled.aside`
  width: 70px;
  flex: none;
  padding: 2px 2px 0 1px;
  border-right: 1px solid #c2c6ce;
`;
const Grip = styled.div`height: 4px; margin: ${(p) => p.$t || 1}px 0 ${(p) => p.$b || 0}px 2px; border: 1px solid #b0b4bd; border-width: 1px 0;`;
const ToolGrid = styled.div`display: grid; grid-template-columns: 28px 28px; padding-top: ${(p) => p.$t || 0}px; grid-auto-rows: 28px;`;
const PluginDock = styled.aside`width: 58px; flex: none; display: flex; flex-direction: column; padding: 3px 4px 0;`;
const PluginBody = styled.div`flex: 1; display: flex;`;
const SideTabs = styled.div`width: 16px; flex: none; border-right: 1px solid #8f98ab; display: flex; flex-direction: column; padding-top: 1px;`;
const SideTab = styled.button`
  height: 32px;
  width: 17px;
  display: flex;
  align-items: center;
  justify-content: center;
  border: 1px solid #a4abb9;
  border-width: 0 0 1px 1px;
  border-radius: 0 0 0 6px;
  font: bold 9px/12px ${SONG};
  background: ${(p) => (p.$on ? "#e4e7ea" : "#dde0e8")};
`;
const PluginTools = styled.div`display: flex; flex-direction: column; align-items: center; width: 32px; padding-top: 2px;`;
const Sdnf = styled.button`height: 28px; width: 28px; font: bold 8px/9px ${SONG}; span { display: block; font: bold 12px/14px "DejaVu Sans Mono", monospace; }`;
const GearSlot = styled.div`height: 29px; display: flex; justify-content: flex-start; padding: 6px 2px;`;

const Centre = styled.div`flex: 1; min-width: 0; display: flex; flex-direction: column; padding-top: 2px;`;
const Viewport = styled.div`
  flex: 1;
  min-height: 0;
  border: 1px solid #98a2b0;
  background: #fdfdfe;
  display: grid;
  overflow: hidden;
  > * { grid-area: 1 / 1; }
`;
const Scene = styled.svg`display: block; width: 100%; height: 100%; min-height: 0;`;
const ViewTitle = styled.button`
  justify-self: start;
  align-self: start;
  z-index: 1;
  display: flex;
  align-items: center;
  height: 18px;
  padding-left: 9px;
  background: #8fa4c0;
  color: #16243a;
  font: 12px/18px ${HUMAN};
`;
const Drop = styled.span`margin-left: 9px; padding: 0 1px; height: 14px; display: flex; align-items: center; border-left: 1px solid #16243a;`;
const ViewTabs = styled.div`flex: none; height: 26px; display: flex; gap: 3px;`;
const ViewTab = styled.button`
  height: 22px;
  padding: 0 6px 0 9px;
  font: 12px/21px ${HUMAN};
  border: 1px solid #a9b0be;
  border-top: 0;
  border-radius: 0 0 3px 10px;
  background: ${(p) => (p.$on ? "#fff" : "#d8dce6")};
  &:not(:first-child) { padding: 0 ${(p) => (p.$plus ? 9 : 6)}px 0 ${(p) => (p.$plus ? 9 : 6)}px; }
`;

const Side = styled.aside`width: 200px; flex: none; margin: 1px 0 7px 7px; display: flex; flex-direction: column;`;
const PanelTabs = styled.div`display: flex; height: 22px; background: #e0e3e9; padding-right: 1px;`;
const PanelTab = styled.button`
  width: 35px;
  display: flex;
  align-items: center;
  padding-left: 4px;
  border: 1px solid #9aa2b2;
  border-width: ${(p) => (p.$on ? "1px 0 0 1px" : "1px 0 1px 1px")};
  border-radius: 5px 12px 0 0;
  background: ${(p) => (p.$on ? "#f5f5f9" : "#dbe0ef")};
`;
const GearTab = styled.button`flex: 1; display: flex; align-items: center; justify-content: flex-end; border-bottom: 1px solid #9aa2b2;`;
const Panel = styled.div`flex: 1; background: #f5f5f9; border: 1px solid #9aa2b2; border-top: 0; padding: 8px 7px 0 3px;`;
const Props = styled.div`font: 10px/17px ${SONG}; border: 1px solid #e2e3ea; border-top: 0;`;
const PropHead = styled.div`height: 22px; line-height: 21px; padding-left: 3px; border-top: 1px solid #e2e3ea;`;
const PropRow = styled.div`
  display: grid;
  grid-template-columns: 83px 1fr;
  height: 18px;
  border-top: 1px solid #e6e7ee;
  margin-left: 11px;
  background: #fdfdff;
  color: ${(p) => (p.$off ? "#7c7f86" : "inherit")};
`;
const PropName = styled.label`padding-left: 9px; border-right: 1px solid #e2e3ea; white-space: nowrap;`;
const PropCell = styled.div`display: flex; align-items: center; min-width: 0; background: ${(p) => (p.$off ? "#dfe2e7" : "none")};`;
const Field = styled.input`width: 100%; min-width: 0; height: 17px; padding-left: 4px;`;
const Choice = styled.select`
  appearance: none; flex: 1; min-width: 0; height: 17px; padding-left: 3px;
`;
const Arrow = styled.span`width: 17px; height: 17px; flex: none; display: flex; align-items: center; justify-content: center; border: 1px solid #777; border-width: 1px 0 0 1px;`;
const Push = styled.button`
  height: 16px;
  ${(p) => (p.$small ? "width: 16px;" : "flex: 1; margin-left: 2px;")}
  border: 1px solid #777a80;
  border-radius: 3px;
  background: linear-gradient(#f6f6f7, #e3e4e6 50%, #cfd0d4);
  line-height: 12px;
`;
const Tick = styled.input`
  appearance: none;
  position: relative;
  flex: none;
  width: ${(p) => (p.$big ? 17 : 13)}px;
  height: ${(p) => (p.$big ? 17 : 13)}px;
  border: 1px solid #7d8087;
  border-radius: ${(p) => (p.$big ? 3 : 0)}px;
  background: linear-gradient(135deg, #d9dce1, #fbfbfc);
  &:checked::after { content: ""; position: absolute; left: 3px; top: 0; width: 5px; height: 9px; border: solid #3d4590; border-width: 0 2px 2px 0; transform: rotate(40deg); }
`;
const InCell = styled.span`padding-left: 4px; display: flex;`;

const Snaps = styled.div`height: 26px; flex: none; display: flex; align-items: center; margin-left: 3px; padding-left: 7px; border-left: 2px solid #c9c9c0; gap: 8px; font: 10px/16px ${SONG};`;
const Snap = styled.label`display: flex; align-items: center; gap: ${(p) => (p.$big ? 3 : 6)}px; margin-left: ${(p) => (p.$big ? -2 : 0)}px;`;
const Status = styled.footer`height: 20px; flex: none; display: flex; border-top: 1px solid #b4b8c0; background: #e2e5ea; font: 12px/20px ${ARIAL};`;
const Cell = styled.button`
  width: ${(p) => p.$w}px;
  flex: none;
  overflow: hidden;
  white-space: nowrap;
  border-right: 1px solid #aeb3bc;
  font-weight: ${(p) => (p.$on ? "bold" : "normal")};
  background: ${(p) => (p.$on ? "#e9f2f8" : "none")};
  display: flex;
  align-items: center;
  justify-content: ${(p) => (p.$left ? "flex-start" : "center")};
  gap: 2px;
  padding: 0 ${(p) => (p.$left ? 3 : 0)}px;
`;
const Swatch = styled.i`width: 14px; height: 14px; background: #000;`;

const eyePoint = [-32.626, -50.852, 46.888];
const dir = [0.6343, 0.6836, -0.3612];
const right = [0.7331, -0.6802, 0];
const up = [0.2457, 0.2648, 0.9326];
const dot = (a, b) => a[0] * b[0] + a[1] * b[1] + a[2] * b[2];
const project = (x, y) => {
  const v = [x - eyePoint[0], y - eyePoint[1], -eyePoint[2]];
  const k = 1264 / dot(v, dir);
  return `${(303.5 + dot(v, right) * k).toFixed(1)} ${(383 - dot(v, up) * k).toFixed(1)}`;
};
const gridPath = Array.from({ length: 101 }, (_, i) => i - 50)
  .map((i) => `M${project(i, -50)}L${project(i, 50)}M${project(-50, i)}L${project(50, i)}`).join("");
const marks = [[788,69],[847,73],[737,93],[786,101],[838,99],[678,119],[724,115],[883,111],[945,128],[821,126],[734,140],[911,146],[676,160],[735,162],[814,155],[867,155],[949,165],[606,167],[785,181],[1038,181],[716,188],[553,196],[914,201],[834,205],[984,207],[503,211],[634,212],[747,207],[691,220],[1098,225],[881,226],[437,232],[511,237],[587,242],[648,240],[729,242],[968,236],[808,247],[911,248],[1016,249],[388,266],[545,259],[487,273],[578,280],[628,280],[684,285],[963,276],[783,285],[887,285],[315,296],[368,297],[444,297],[531,307],[235,321],[325,324],[391,320],[590,321],[656,315],[744,319],[837,320],[478,327],[891,336],[806,344],[182,362],[246,354],[418,352],[335,365],[519,365],[618,357],[687,360],[829,366],[750,367],[111,399],[282,389],[382,385],[437,392],[577,401],[650,403],[735,409],[182,411],[323,410],[455,422],[515,418],[379,436],[630,440],[290,454],[460,458],[189,462],[639,468],[349,477],[544,477],[248,500],[437,503],[507,508],[304,522],[375,540],[459,556],[324,570],[412,574]];

const PerspectiveScene = () => (
  <Scene viewBox="0 0 607 766" preserveAspectRatio="xMinYMax slice" fill="none" role="img" aria-label="Perspective view">
    <path d={gridPath} stroke="#8d8d8d" strokeWidth=".8" />
    <path d={`M${project(0, 0)}L${project(50, 0)}`} stroke="#96383c" strokeWidth="1.300" />
    <path d={`M${project(0, 0)}L${project(0, 50)}`} stroke="#2c8a2c" strokeWidth="1.300" />
    <path d="M117 771L359 642" stroke="#5f6a12" strokeWidth="1.500" />
    <path d="M359 642L262 584 30 700" stroke="#14861c" strokeDasharray="3 2" />
    <path d="M36 729V706M36 729L20 724M36 729L62 720" stroke="#9a9a9a" />
    <g transform="translate(-7 567) scale(.3333)" stroke="#0c9418" strokeWidth="8">
      {marks.map(([x, y]) => <path key={`${x}-${y}`} d={`M${x - 11} ${y - 11}l22 22m0-22l-22 22`} />)}
    </g>
    <g fill="#555" fontFamily="Liberation Sans, Arial, sans-serif" fontSize="13">
      <text x="38" y="703">z</text><text x="18" y="725">y</text><text x="60" y="724">x</text>
    </g>
  </Scene>
);

const topTools = ["hand", "orbit", "zoom", "zoomExt", "zoomWin", "zoomSel", "undoView", "zoomTo", "zoom11", "|", "carTop", "carBot", "carFront", "carR", "carL", "carBack", "carIso", "|", "carHand", "camera", "carSave", "folderWin", "ball", "ball2", "|", "target", "targetSel", "dropPlane", "camPlane", "cube", "|"];
const mainTools = ["arrow", "point+", "polyline+", "curve+", "circle+", "ellipse+", "arc+", "rect+", "polygon+", "fillet+", "srfPts+", "srfBend+", "box+", "spheres+", "cyl+", "mesh+", "gearJoin", "explode", "trim", "split", "union+", "diff", "editPt", "offset+", "text", "move+", "copy", "rotate", "boxCut+", "project+", "array+", "align+", "bend+"];
const layerTools = ["cake", "cakeRot", "cakeChk", "cakeSel", "bulb", "bulbOff", "bulbCake", "cakeStack", "cakeFade", "cakeList"];

const ToolButton = ({ id, size = 22 }) => {
  const name = id.replace("+", "");
  return <Tool $more={id.endsWith("+")} aria-label={name}><Icon name={name} size={size} /></Tool>;
};

const groups = [
  ["Viewport", [["Title", "Perspective"], ["Width", "607", "off"], ["Height", "766", "off"], ["Projection", "Perspective", "select"]]],
  ["Camera", [["Lens Length", "50.0"], ["X Location", "-32.626"], ["Y Location", "-50.852"], ["Z Location", "46.888"], ["Location", "Place...", "push"]]],
  ["Target", [["X Target", "16.068"], ["Y Target", "1.629"], ["Z Target", "19.157"], ["Location", "Place...", "push"]]],
  ["Wallpaper", [["Filename", "(none)", "file"], ["Show", "", "tick"], ["Gray", "", "tick"]]],
];

const Property = ({ group, row: [name, value, kind] }) => {
  const id = `${group}-${name}`.replace(/\s/g, "");
  const off = kind === "off";
  return (
    <PropRow $off={off}>
      <PropName htmlFor={id}>{name}</PropName>
      <PropCell $off={off}>
        {(!kind || off || kind === "file") && <Field id={id} defaultValue={value} readOnly={off} />}
        {kind === "file" && <Push $small aria-label="Browse">..</Push>}
        {kind === "select" && <><Choice id={id} defaultValue={value}><option>Perspective</option><option>Parallel</option></Choice><Arrow><Tri $w={4} /></Arrow></>}
        {kind === "push" && <Push id={id}>{value}</Push>}
        {kind === "tick" && <InCell><Tick id={id} type="checkbox" defaultChecked /></InCell>}
      </PropCell>
    </PropRow>
  );
};

const snapList = [["End", 1], ["Near", 1], ["Point", 0], ["Mid", 1], ["Cen", 0], ["Int", 0], ["Perp", 1], ["Tan", 0], ["Quad", 0], ["Knot", 0], ["Vertex", 1], ["Project", 0, 1], ["Disable", 0, 1]];

const ModelWindow = () => (
  <WindowFrame title="Untitled - Undefined (Undefined) - [Perspective]" icon="rhino" bg="#e1e4ea">
    <MenuBar>{["File", "Edit", "View", "Curve", "Surface", "Solid", "Mesh", "Dimension", "Transform", "Tools", "Analyze", "Render", "Panels", "Help"].map((m) => <MenuItem key={m}>{m}</MenuItem>)}</MenuBar>
    <Command>
      <History>
        <HistoryText>
          <p>Exception System.IO.FileNotFoundException:</p>
          <p>Message: <Cjk>未能加载文件或程序集</Cjk><Song> “Maxwell, Version=2.6.10.0, Culture=neutral, PublicKeyToken=0c67436bca449732” </Song><Cjk>或它的某一个依赖项。系统找不到指定的文件。</Cjk></p>
        </HistoryText>
        <ScrollBar><Tri $up /><Thumb /><Tri /></ScrollBar>
      </History>
      <Prompt>Command:<PromptInput /><Spin><Tri $up /><Tri /></Spin></Prompt>
    </Command>
    <Bars>
      <BarShell $grow>
        <TabStrip>
          <TabClip>{["Standard", "CPlanes", "Set View", "Display", "Select", "Viewport Layout", "Visibility", "Transform", "Curve Tools", "Surface Tools", "So"].map((t) => <SlantTab key={t} $on={t === "Set View"}>{t}</SlantTab>)}</TabClip>
          <Chevron aria-label="More tabs">»</Chevron><Icon name="cog" size={15} />
        </TabStrip>
        <Tools>
          {topTools.map((t, i) => (t === "|" ? <Rule key={i} $m={2} /> : <ToolButton key={t} id={t === "undoView" ? "undoView+" : t} size={24} />))}
          <Tool $w={40} aria-label="More tools"><Chevron as="span">»</Chevron></Tool>
        </Tools>
      </BarShell>
      <BarShell $w={53}><BarRow $mid><Chevron aria-label="More">»</Chevron></BarRow></BarShell>
      <BarShell $w={51}><BarRow><Icon name="cplane" size={24} /><Chevron aria-label="More planes">»</Chevron></BarRow></BarShell>
    </Bars>
    <Body>
      <Dock>
        <Grip />
        <ToolGrid $t={3}>{mainTools.map((t) => <ToolButton key={t} id={t} />)}<Tool $w={38} aria-label="More tools"><Chevron as="span">»</Chevron></Tool></ToolGrid>
        <Grip $t={12} $b={1} />
        <ToolGrid>{layerTools.map((t) => <ToolButton key={t} id={t} />)}</ToolGrid>
      </Dock>
      <PluginDock>
        <Grip />
        <PluginBody>
          <SideTabs>{["ant", "rings", "dots", "ship", "rlogo", "saf", "fish", "planet", "squares"].map((t) => <SideTab key={t} aria-label={t}><Icon name={t} size={14} /></SideTab>)}<SideTab $on>SDN</SideTab></SideTabs>
          <PluginTools>
            <Sdnf>OPEN<span>SDNF</span></Sdnf>
            {["paste", "trash", "home1", "tree", "hammer", "link", "help"].map((t) => <ToolButton key={t} id={t} size={20} />)}
          </PluginTools>
        </PluginBody>
        <GearSlot><Icon name="cog" size={15} /></GearSlot>
      </PluginDock>
      <Centre>
        <Viewport>
          <PerspectiveScene />
          <ViewTitle>Perspective<Drop><Tri $w={4} /></Drop></ViewTitle>
        </Viewport>
        <ViewTabs><ViewTab $on>Perspective</ViewTab><ViewTab>Top</ViewTab><ViewTab>Front</ViewTab><ViewTab>Right</ViewTab><ViewTab $plus aria-label="New view"><Art $s={10} viewBox="0 0 10 10"><path d="M4 1H6V4H9V6H6V9H4V6H1V4H4Z" fill="#fff" stroke="#555" /></Art></ViewTab></ViewTabs>
      </Centre>
      <Side>
        <Grip $b={3} />
        <PanelTabs>
          <PanelTab $on aria-label="Properties"><Icon name="wheel" size={16} /></PanelTab>
          <PanelTab aria-label="Layers"><Icon name="cake" size={18} /></PanelTab>
          <PanelTab aria-label="Display"><Icon name="monitor" size={16} /></PanelTab>
          <PanelTab aria-label="Help"><Icon name="helpDoc" size={17} /></PanelTab>
          <PanelTab aria-label="Sun"><Icon name="sun" size={15} /></PanelTab>
          <GearTab aria-label="Options"><Icon name="cog" size={15} /></GearTab>
        </PanelTabs>
        <Panel>
          <Props>{groups.map(([g, rows]) => <React.Fragment key={g}><PropHead>{g}</PropHead>{rows.map((r) => <Property key={r[0]} group={g} row={r} />)}</React.Fragment>)}</Props>
        </Panel>
      </Side>
    </Body>
    <Snaps>{snapList.map(([n, on, big]) => <Snap key={n} $big={big}><Tick type="checkbox" $big={big} defaultChecked={!!on} />{n}</Snap>)}</Snaps>
    <Status>
      <Cell $w={47}>CPlane</Cell><Cell $w={72}>x 56.30</Cell><Cell $w={72}>y 12.38</Cell><Cell $w={72}>z 0.00</Cell><Cell $w={72}>Meters</Cell>
      <Cell $w={141} $left><Swatch />Default</Cell>
      <Cell $w={63}>Grid Snap</Cell><Cell $w={39}>Ortho</Cell><Cell $w={45}>Planar</Cell><Cell $w={45} $on>Osnap</Cell><Cell $w={70} $on $left>SmartTrack</Cell><Cell $w={55}>Gumball</Cell><Cell $w={89}>Record History</Cell><Cell $w={38}>Filter</Cell><Cell $w={6} aria-label="More" />
    </Status>
  </WindowFrame>
);

/* ---------- node editor window ---------- */

const GhTabs = styled.div`height: 23px; flex: none; display: flex; gap: 1px; padding-left: 1px; background: #f2f2f2; border-bottom: 1px solid #9a9a96;`;
const GhTab = styled.button`
  min-width: 27px;
  height: 23px;
  padding: 0 8px;
  font: 10px/18px ${SONG};
  color: ${(p) => (p.$on ? "#000" : "#666")};
  border: solid #9a9a96;
  border-width: ${(p) => (p.$on ? "1px 1px 0" : "0")};
  ${(p) => p.$on && "padding: 0 7px 4px;"}
  border-radius: 6px 6px 0 0;
  background: ${(p) => (p.$on ? "linear-gradient(#fff,#e4e4e4)" : "none")};
`;
const Ribbon = styled.div`height: 80px; flex: none; display: flex; align-items: flex-start; gap: 3px; padding: 3px 3px 0; background: linear-gradient(#d5d5d5, #efefef); border-bottom: 1px solid #777; border-radius: 0 6px 0 0;`;
const Group = styled.div`
  width: ${(p) => p.$w}px;
  height: 71px;
  flex: none;
  display: flex;
  flex-direction: column;
  border: 1px solid #777;
  border-radius: 5px 5px 2px 2px;
  overflow: hidden;
  background: linear-gradient(#d6d6d6, #eaeaea);
`;
const GroupTools = styled.div`flex: 1; display: flex; align-items: center; justify-content: space-evenly;`;
const Pair = styled.div`display: flex; flex-direction: column; gap: 6px;`;
const GhTool = styled.button`width: 22px; height: 22px;`;
const GroupName = styled.button`
  height: 12px;
  background: #1f1f1f;
  color: #fff;
  font: 10px/11px ${SONG};
  display: grid;
  grid-template-columns: 10px 1fr 12px;
  &::after { content: "+"; color: #bbb; }
  span { grid-column: 2; }
`;
const GhBar = styled.div`height: 31px; flex: none; display: flex; align-items: center; padding: 0 5px; background: linear-gradient(#fff, #f0f0f0);`;
const BarTool = styled.button`
  height: 28px;
  width: ${(p) => p.$w || 30}px;
  display: flex;
  align-items: center;
  justify-content: ${(p) => (p.$drop ? "flex-start" : "center")};
  gap: 5px;
  padding: 0 ${(p) => (p.$drop ? 4 : 0)}px;
  border: 1px solid ${(p) => (p.$on ? "#5aa2d8" : "transparent")};
  background: ${(p) => (p.$on ? "#eef6fc" : "none")};
`;
const Zoom = styled.label`width: 69px; height: 23px; display: flex; align-items: center; border: 1px solid #e2e2e2; background: #fff; padding-right: 4px; select { appearance: none; flex: 1; min-width: 0; padding-left: 2px; font: 13px/20px ${HUMAN}; }`;
const Push2 = styled.span`flex: 1;`;
const Canvas = styled.div`
  flex: 1;
  min-height: 0;
  margin: 0 2px 0 1px;
  position: relative;
  overflow: hidden;
  background: #d3d0c8;
`;
const Lines = styled.svg`display: block; width: 100%; height: 100%;`;
const NodeBox = styled.div`
  position: absolute;
  left: ${(p) => p.$x}px;
  top: ${(p) => p.$y}px;
  width: ${(p) => p.$w}px;
  height: ${(p) => p.$h}px;
  display: flex;
  border: 2px solid ${(p) => (p.$green ? "#16390f" : "#47230a")};
  border-radius: 5px;
  font: 22px/28px ${HUMAN};
  background: ${(p) => (p.$green
    ? "linear-gradient(#e3f9c9 0,#b5f080 14px,#96ee49 15px,#94ea48 40%,#7fd52d 100%)"
    : "linear-gradient(#ffd9a0 0,#ffc06a 12px,#ff9f2e 13px,#f98a14 100%)")};
  color: ${(p) => (p.$green ? "#0d3a10" : "#4a2300")};
`;
const Inputs = styled.div`width: 94px; display: flex; flex-direction: column; justify-content: space-around; align-items: flex-end; padding: 0 10px 6px 0;`;
const Name = styled.div`
  width: 48px;
  margin: 1px 0 2px;
  border: 2px solid #0c240c;
  border-radius: 6px;
  background: linear-gradient(#8fa58c 0, #5f7c5d 12px, #2a5229 13px, #1d4520 100%);
  color: #b8f7a0;
  display: flex;
  align-items: center;
  justify-content: center;
  font: bold 27px/40px ${HUMAN};
  padding-right: 4px;
  span { writing-mode: vertical-rl; transform: rotate(180deg); white-space: nowrap; }
`;
const Output = styled.div`flex: 1; display: flex; align-items: center; padding: 0 0 5px 8px;`;
const Centered = styled.div`flex: 1; display: flex; align-items: center; justify-content: center; padding-bottom: 4px;`;
const Plug = styled.i`
  position: absolute;
  left: ${(p) => p.$x}px;
  top: ${(p) => p.$y}px;
  width: 10px;
  height: 20px;
  border: 4px solid #080808;
  background: #fff;
  ${(p) => (p.$r ? "border-left: 0; border-radius: 0 10px 10px 0;" : "border-right: 0; border-radius: 10px 0 0 10px;")}
`;
const Balloon = styled.i`position: absolute; left: 149px; top: 28px; width: 19px; height: 14px; border: 1px solid #a77b12; border-radius: 3px; background: linear-gradient(#fbd867, #e8b022);`;
const Pointer = styled.svg`position: absolute; left: 424px; top: 246px; width: 14px; height: 20px;`;
const Widgets = styled.div`position: absolute; left: 0; bottom: 0; height: 27px; display: flex; align-items: center; gap: 4px; padding: 0 6px 0 3px; border: 1px solid #444; border-left: 0; background: linear-gradient(90deg, #a5a5a5, #e0e0e0 60%, #b5b5b5);`;
const Widget = styled.button`width: 24px; height: 23px; display: flex; align-items: center; justify-content: center; border-radius: 4px; border: 1px solid ${(p) => (p.$on ? "#222" : "transparent")}; background: ${(p) => (p.$on ? "#bdbdbd" : "none")};`;
const Compass = styled.svg`position: absolute; right: 8px; bottom: 8px; width: 44px; height: 46px;`;
const GhStatus = styled.footer`height: 24px; flex: none; display: flex; align-items: center; justify-content: space-between; padding: 4px 2px 0 8px; background: #f9f9f9; color: #555; font: 11px/16px "Roboto", ${ARIAL};`;
const Version = styled.span`display: flex; align-items: center; gap: 5px; color: #8a8078;`;

const tabs = ["Prm", "Math", "Set", "Vec", "Crv", "Srf", "Msh", "Int", "Trns", "GeomGymBIM", "Extra", "Wb", ..."PRKRLGTSSgNHAHR"];
const ribbon = [
  ["Colour", 61, [["balls", "tealBox"], ["redBall", "redPoly"]]],
  ["Field", 71, [["mag1", "mag3"], ["mag2", "mag4"]]],
  ["Grid", 71, [["grid3", "grid2"], ["pop2", "pop3"]]],
  ["Plane", 109, [["plane1", "planeXY"], ["plane2", "plane4"], ["plane3", "plane5"]]],
  ["Point", 147, [["xyzDown", "xyzUp"], ["ruler", "pointPull"], ["star", "sort"], ["tagX", "tag"]]],
  ["Vector", 71, [["vecXyz", "xyzVec"], ["vec2", "vecLen"]]],
];
const hLines = Array.from({ length: 12 }, (_, i) => 25 + i * 97.7);
const vLines = Array.from({ length: 4 }, (_, i) => 236 + i * 293);

const NodeWindow = () => (
  <WindowFrame title="Grasshopper - unnamed" active bg="#f4f4f4">
    <MenuBar $gh>{["File", "Edit", "View", "Display", "Solution", "Help"].map((m) => <MenuItem key={m}>{m}</MenuItem>)}<DocName>unnamed</DocName></MenuBar>
    <GhTabs>{tabs.map((t, i) => <GhTab key={i} $on={t === "Vec"}>{t}</GhTab>)}</GhTabs>
    <Ribbon>
      {ribbon.map(([name, w, cols]) => (
        <Group key={name} $w={w}>
          <GroupTools>{cols.map((c, i) => <React.Fragment key={i}>{i > 0 && name !== "Colour" && <Rule $h={40} $m={1} />}<Pair>{c.map((n) => <GhTool key={n} aria-label={n}><Icon name={n} size={22} /></GhTool>)}</Pair></React.Fragment>)}</GroupTools>
          <GroupName><span>{name}</span></GroupName>
        </Group>
      ))}
    </Ribbon>
    <GhBar>
      <BarTool $w={26} aria-label="Open"><Icon name="open" size={22} /></BarTool>
      <BarTool $w={34} aria-label="Save"><Icon name="save" size={23} /></BarTool>
      <Rule $h={20} $m={3} />
      <Zoom><select aria-label="Zoom" defaultValue="195%"><option>100%</option><option>195%</option></select><Tri $w={4} /></Zoom>
      <BarTool $drop $w={40} aria-label="Zoom extents"><Icon name="fit" size={22} /><Tri /></BarTool>
      <BarTool $drop $w={42} aria-label="Preview"><Icon name="eye" size={22} /><Tri /></BarTool>
      <BarTool $w={28} aria-label="Sketch"><Icon name="pencil" size={24} /></BarTool>
      <Push2 />
      <BarTool $w={28} aria-label="No preview"><Icon name="canGrey" size={24} /></BarTool>
      <BarTool aria-label="Wireframe"><Icon name="canWire" size={24} /></BarTool>
      <BarTool $w={28} $on aria-label="Shaded"><Icon name="canRed" size={25} /></BarTool>
      <Rule $h={22} $m={7} />
      <BarTool $w={28} aria-label="Selected only"><Icon name="canGreen" size={24} /></BarTool>
      <BarTool aria-label="Settings"><Icon name="ballHalf" size={22} /></BarTool>
      <Rule $h={22} $m={2} />
      <BarTool $drop $w={36} aria-label="Mesh quality"><Icon name="hexBlue" size={20} /><Tri /></BarTool>
    </GhBar>
    <Canvas>
      <Lines stroke="#b9b6af" strokeWidth="2">
        {hLines.map((y) => <line key={y} x1="0" x2="100%" y1={y} y2={y} />)}
        {vLines.map((x) => <line key={x} y1="0" y2="100%" x1={x} x2={x} />)}
      </Lines>
      <Plug $x={63} $y={52} /><Plug $x={169} $y={52} $r />
      <NodeBox $x={71} $y={42} $w={100} $h={41}><Centered>Plane</Centered></NodeBox>
      <Balloon />
      {[226, 273, 320, 367].map((y) => <Plug key={y} $x={264} $y={y} />)}
      <Plug $x={556} $y={297} $r />
      <NodeBox $green $x={273} $y={210} $w={285} $h={196}>
        <Inputs>{["Region", "Count", "Seed", "Points"].map((n) => <span key={n}>{n}</span>)}</Inputs>
        <Name><span>Populate 2D</span></Name>
        <Output>Population</Output>
      </NodeBox>
      <Pointer viewBox="0 0 14 20"><path d="M1 1V15.500L4.500 12.500 7 18 9.500 17 7 11.500H12Z" fill="#fff" stroke="#222" /></Pointer>
      <Widgets><Widget $on aria-label="Align"><Icon name="down" size={18} /></Widget><Widget aria-label="Compass"><Icon name="diamond" size={22} /></Widget><Widget $on aria-label="Profiler"><Icon name="oak" size={19} /></Widget><Widget aria-label="Markov"><Icon name="leaf" size={21} /></Widget><Widget $on aria-label="Populate"><Icon name="pop2" size={20} /></Widget></Widgets>
      <Compass viewBox="0 0 44 46"><path d="M3 2L10 3 9 9 4 9ZM7 11L13 8 11 14Z" fill="#111" /><circle cx="23" cy="25" r="20" fill="#fff" stroke="#222" /><circle cx="23" cy="25" r="17.500" fill="url(#compass)" /><path d="M9 11L14 13 11 16ZM37 11L32 13 35 16ZM9 39L14 37 11 34ZM37 39L32 37 35 34Z" fill="#fff" /></Compass>
    </Canvas>
    <GhStatus><span>_</span><Version>0.9.0056<Art $s={12} viewBox="0 0 12 12" fill="#aaa"><path d="M9 1h2v2H9zM5 5h2v2H5zM9 5h2v2H9zM1 9h2v2H1zM5 9h2v2H5zM9 9h2v2H9z" /></Art></Version></GhStatus>
  </WindowFrame>
);

const Banner = styled.footer`
  height: 40px;
  flex: none;
  display: flex;
  align-items: center;
  gap: 11px;
  padding: 0 11px 0 5px;
  background: #2e8499;
  color: #05080a;
  white-space: nowrap;
`;
const Site = styled.a`font: italic 300 27px/36px "Lato", sans-serif; color: #ddfafa; text-decoration: none;`;
const Heavy = styled.span`
  font: 900 37px/34px ${HEI};
  padding-bottom: 6px;
  margin-left: ${(p) => (p.$end ? "auto" : 0)};
`;
const Digits = styled.span`font-size: 43px;`;

export default function App() {
  return (
    <Desktop>
      <Global />
      <Paints />
      <Windows><ModelWindow /><NodeWindow /></Windows>
      <Banner><Site href="#">CADesign.cn</Site><Heavy>版权所有</Heavy><Heavy $end><Digits>02_</Digits>基础</Heavy></Banner>
    </Desktop>
  );
}
